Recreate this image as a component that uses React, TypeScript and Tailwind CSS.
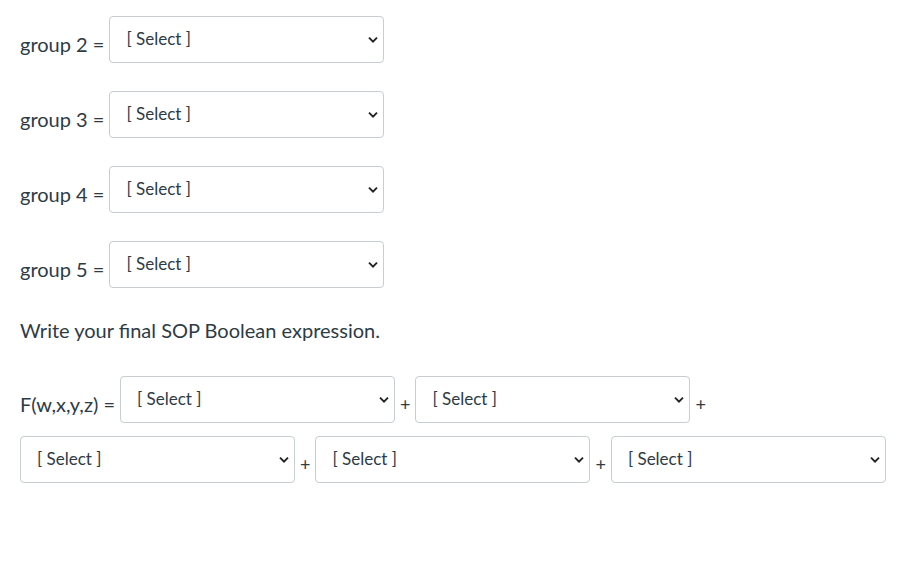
import React from 'react';

const Chevron = () => (
  <svg
    className="pointer-events-none absolute right-[6px] top-1/2 -translate-y-1/2"
    width="10"
    height="7"
    viewBox="0 0 10 7"
    fill="none"
  >
    <path d="M1 1.2 L5 5.2 L9 1.2" stroke="#222" strokeWidth="1.9" />
  </svg>
);

const Dropdown = () => (
  <div className="relative h-[47px] w-[275px] shrink-0">
    <select
      defaultValue=""
      className="h-full w-full appearance-none rounded-[4px] border border-[#c7cdd1] bg-white pb-[2px] pl-[16px] pr-6 text-[17px] text-[#2d3b45] outline-none"
      style={{ fontFamily: 'Lato, "Noto Sans", sans-serif' }}
    >
      <option value="">[ Select ]</option>
    </select>
    <Chevron />
  </div>
);

const Plus = () => <span className="pt-[9px] text-[18px] leading-none text-[#2d3b45]">+</span>;

export default function App() {
  const groups = [2, 3, 4, 5];
  return (
    <div
      className="min-h-screen bg-white pl-5 pt-4 text-[20px] text-[#2d3b45]"
      style={{ fontFamily: 'Lato, "Noto Sans", sans-serif' }}
    >
      <div className="flex flex-col gap-[28px]">
        {groups.map((g) => (
          <div key={g} className="flex items-center gap-[5px]">
            <span className="pt-[9px] leading-none">group {g} =</span>
            <Dropdown />
          </div>
        ))}
      </div>

      <p className="mt-[32px] leading-none">Write your final SOP Boolean expression.</p>

      <div className="mt-[36px] flex flex-col gap-[13px]">
        <div className="flex items-center gap-[5px]">
          <span className="pt-[9px] leading-none">F(w,x,y,z) =</span>
          <Dropdown />
          <Plus />
          <Dropdown />
          <Plus />
        </div>
        <div className="flex items-center gap-[5px]">
          <Dropdown />
          <Plus />
          <Dropdown />
          <Plus />
          <Dropdown />
        </div>
      </div>
    </div>
  );
}
